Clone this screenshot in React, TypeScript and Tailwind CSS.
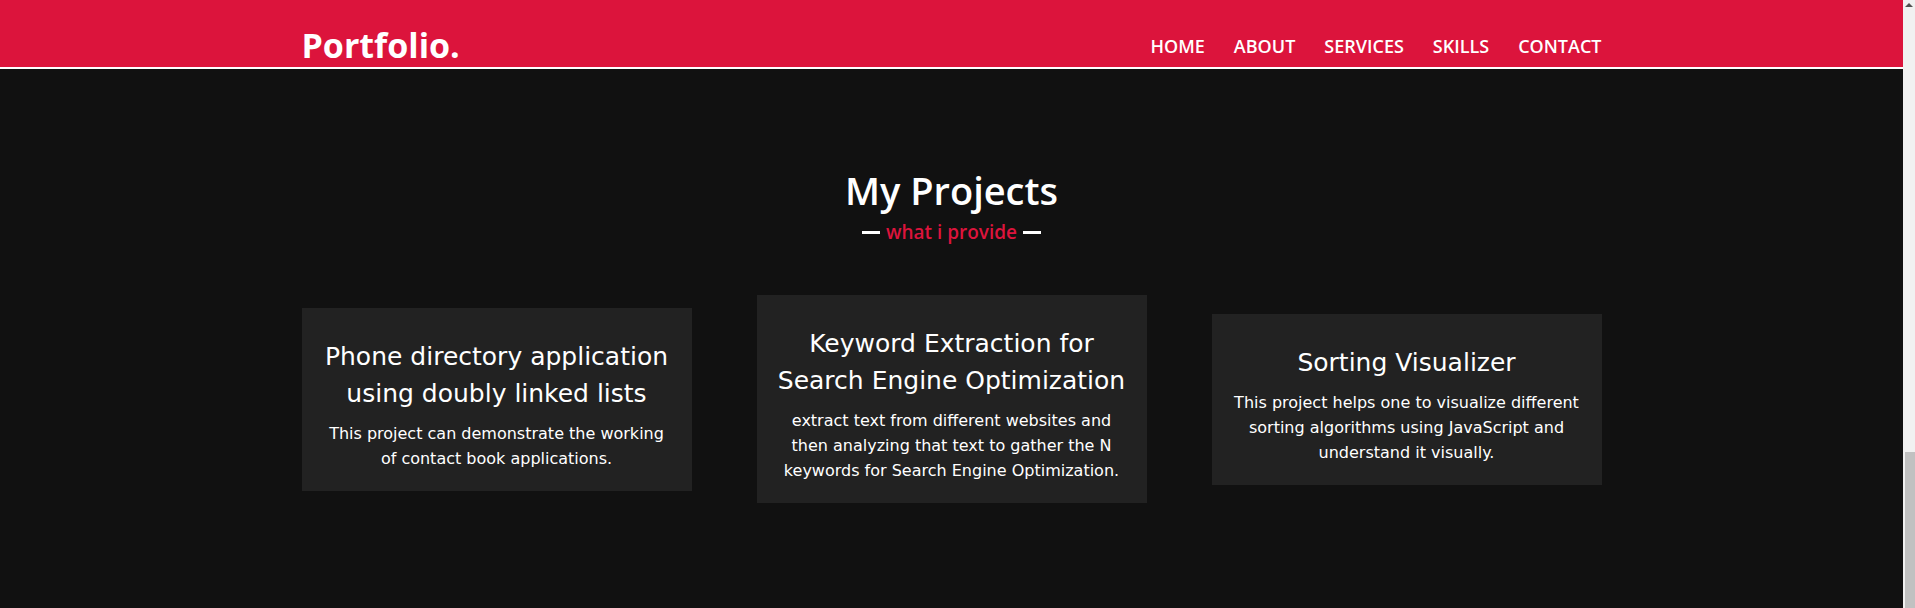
const navLinks = ['HOME', 'ABOUT', 'SERVICES', 'SKILLS', 'CONTACT']

const projects = [
  {
    title: ['Phone directory application', 'using doubly linked lists'],
    text: ['This project can demonstrate the working', 'of contact book applications.'],
  },
  {
    title: ['Keyword Extraction for', 'Search Engine Optimization'],
    text: [
      'extract text from different websites and',
      'then analyzing that text to gather the N',
      'keywords for Search Engine Optimization.',
    ],
  },
  {
    title: ['Sorting Visualizer'],
    text: [
      'This project helps one to visualize different',
      'sorting algorithms using JavaScript and',
      'understand it visually.',
    ],
  },
]

function ProjectCard({ title, text }: { title: string[]; text: string[] }) {
  return (
    <div className="w-[390px] bg-[#222222] px-5 pt-[30px] pb-5 text-center text-white font-['DejaVu_Sans',sans-serif]">
      <h3 className="text-[25px] leading-[37px] font-normal">
        {title.map((line) => (
          <span key={line} className="block whitespace-nowrap">
            {line}
          </span>
        ))}
      </h3>
      <p className="mt-[9px] text-[16px] leading-[25px]">
        {text.map((line) => (
          <span key={line} className="block whitespace-nowrap">
            {line}
          </span>
        ))}
      </p>
    </div>
  )
}

export default function App() {
  return (
    <div className="flex h-[608px] w-full overflow-hidden bg-[#111111]">
      <div className="flex-1 min-w-0 font-['Open_Sans',sans-serif]">
        <header className="h-[69px] bg-[#dc143c] border-b-2 border-white">
          <div className="mx-auto flex max-w-[1300px] items-start justify-between">
            <a className="pt-[25px] text-[34px] leading-[40px] font-bold text-white">Portfolio.</a>
            <nav className="mt-[34px] flex gap-[29px]">
              {navLinks.map((link) => (
                <a key={link} className="text-[18px] leading-[24px] font-semibold text-white">
                  {link}
                </a>
              ))}
            </nav>
          </div>
        </header>

        <main className="mx-auto max-w-[1300px] pt-[99px]">
          <div className="text-center">
            <h2 className="text-[38px] leading-[44px] font-semibold text-white">My Projects</h2>
            <div className="mt-[8px] flex items-center justify-center gap-[6px]">
              <span className="h-[3px] w-[18px] bg-white" />
              <span className="text-[19px] leading-[24px] font-semibold text-[#dc143c]">what i provide</span>
              <span className="h-[3px] w-[18px] bg-white" />
            </div>
          </div>

          <div className="mt-[51px] flex items-center justify-between">
            {projects.map((p) => (
              <ProjectCard key={p.title[0]} title={p.title} text={p.text} />
            ))}
          </div>
        </main>
      </div>

      {/* scrollbar */}
      <div className="flex w-[12px] flex-col bg-[#f1f1f1]">
        <div className="flex justify-center pt-[3px]">
          <span className="h-0 w-0 border-x-[4px] border-b-[4px] border-x-transparent border-b-[#505050]" />
        </div>
        <div className="mt-auto ml-[2px] h-[156px] bg-[#c1c1c1]" />
      </div>
    </div>
  )
}
